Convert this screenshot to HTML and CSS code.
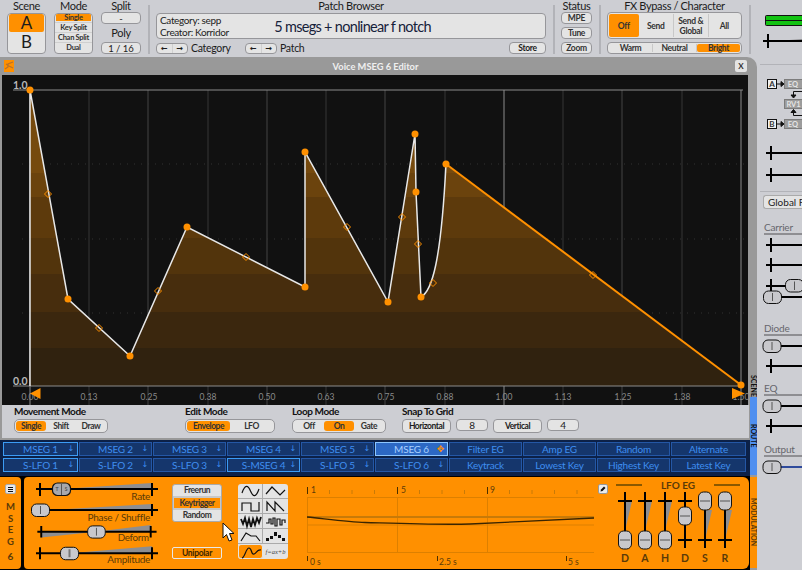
FILE: index.html
```html
<!DOCTYPE html>
<html lang="en">
<head>
<meta charset="UTF-8">
<meta name="viewport" content="width=device-width, initial-scale=1.0">
<title>Voice MSEG 6 Editor</title>
<link rel="stylesheet" href="styles.css">
</head>

<body>
<div class="app">
<div class="main">

<header class="topbar">
  <section class="group scene">
    <h4>Scene</h4>
    <div class="scene-box">
      <div class="scene-btn on">A</div>
      <div class="scene-btn">B</div>
    </div>
  </section>

  <section class="group mode">
    <h4>Mode</h4>
    <div class="mode-box">
      <div class="mode-row on">Single</div>
      <div class="mode-row">Key Split</div>
      <div class="mode-row">Chan Split</div>
      <div class="mode-row">Dual</div>
    </div>
  </section>

  <section class="group split">
    <h4>Split</h4>
    <div class="field">-</div>
    <h4 class="poly-label">Poly</h4>
    <div class="field">1 / 16</div>
  </section>

  <div class="divider"></div>

  <section class="group patch">
    <h4>Patch Browser</h4>
    <div class="patch-box">
      <div class="patch-info">
        <div>Category: sepp</div>
        <div>Creator: Korridor</div>
      </div>
      <div class="patch-name">5 msegs + nonlinear f notch</div>
    </div>
    <div class="patch-nav">
      <div class="arrows"><span>&#8592;</span><span>&#8594;</span></div>
      <span class="nav-label nav-category">Category</span>
      <div class="arrows"><span>&#8592;</span><span>&#8594;</span></div>
      <span class="nav-label">Patch</span>
      <div class="field store">Store</div>
    </div>
  </section>

  <div class="divider"></div>

  <section class="group status">
    <h4>Status</h4>
    <div class="status-btn">MPE</div>
    <div class="status-btn">Tune</div>
    <div class="status-btn">Zoom</div>
  </section>

  <div class="divider"></div>

  <section class="group fx">
    <h4>FX Bypass / Character</h4>
    <div class="fx-box">
      <div class="fx-cell fx-off on">Off</div>
      <div class="fx-cell fx-send">Send</div>
      <div class="fx-cell fx-global">Send &amp;<br>Global</div>
      <div class="fx-cell fx-all">All</div>
    </div>
    <div class="char-box">
      <div class="char-cell">Warm</div>
      <div class="char-cell">Neutral</div>
      <div class="char-cell on">Bright</div>
    </div>
  </section>

  <div class="divider"></div>
</header>

<div class="window">
  <div class="titlebar">
    <svg class="title-icon" viewBox="0 0 10 12">
      <rect width="10" height="12" fill="#ff9000"/>
      <path d="M1 9 L4 7 L4 4 L9 2 M2 4 L5 6 L9 8" fill="none" stroke="#b8722a" stroke-width="1.3"/>
    </svg>
    <div class="title-text">Voice MSEG 6 Editor</div>
    <div class="title-close">X</div>
  </div>

  <div class="window-body">
    <div class="editor">
      <svg class="graph" viewBox="2 75 746 330">
        <defs>
          <linearGradient id="bands" gradientUnits="userSpaceOnUse" x1="0" y1="90" x2="0" y2="386">
            <stop offset="0" stop-color="#764a0e"/>
            <stop offset="0.28" stop-color="#764a0e"/>
            <stop offset="0.28" stop-color="#6b430d"/>
            <stop offset="0.36" stop-color="#6b430d"/>
            <stop offset="0.36" stop-color="#5d3a0c"/>
            <stop offset="0.5" stop-color="#5d3a0c"/>
            <stop offset="0.5" stop-color="#52340c"/>
            <stop offset="0.62" stop-color="#52340c"/>
            <stop offset="0.62" stop-color="#472d0d"/>
            <stop offset="0.75" stop-color="#472d0d"/>
            <stop offset="0.75" stop-color="#3b270e"/>
            <stop offset="0.87" stop-color="#3b270e"/>
            <stop offset="0.87" stop-color="#30220f"/>
            <stop offset="1" stop-color="#30220f"/>
          </linearGradient>
        </defs>
        <path class="grid-dim" d="M89 90V405M208 90V405M326 90V405M445 90V405M563 90V405M682 90V405"/>
        <path class="grid-mid" d="M148 90V405M267 90V405M385 90V405M622 90V405"/>
        <path class="grid-bright" d="M504 90V405M741 90V405M30 90V405"/>
        <path class="grid-dots" d="M22 164H745M22 239H745M22 313H745"/>
        <path class="fill" d="M30 386V90L68 299L130 356L187 227L305 287V152L388 302L415 134L416 192L421 297C432 291 441 262 446 164L741 386Z"/>
        <path class="grid-bright" d="M13 90H743M13 386H743"/>
        <path class="curve" d="M30 386V90L68 299L130 356L187 227L305 287V152L388 302L415 134L416 192L421 297C432 291 441 262 446 164"/>
        <path class="curve-hot" d="M446 164L741 385"/>
        <g class="handles">
          <path d="M48 190.500l3.500 3.500l-3.500 3.500l-3.500-3.500z"/><path d="M99 324.500l3.500 3.500l-3.500 3.500l-3.500-3.500z"/>
          <path d="M158 287.500l3.500 3.500l-3.500 3.500l-3.500-3.500z"/><path d="M246 253.500l3.500 3.500l-3.500 3.500l-3.500-3.500z"/>
          <path d="M347 223.500l3.500 3.500l-3.500 3.500l-3.500-3.500z"/><path d="M402 213.500l3.500 3.500l-3.500 3.500l-3.500-3.500z"/>
          <path d="M418 240.500l3.500 3.500l-3.500 3.500l-3.500-3.500z"/><path d="M433 279.500l3.500 3.500l-3.500 3.500l-3.500-3.500z"/>
          <path d="M593 271.500l3.500 3.500l-3.500 3.500l-3.500-3.500z"/>
        </g>
        <g class="nodes">
          <circle cx="30" cy="90" r="3.5"/><circle cx="68" cy="299" r="3.5"/>
          <circle cx="130" cy="356" r="3.5"/><circle cx="187" cy="227" r="3.5"/>
          <circle cx="305" cy="287" r="3.5"/><circle cx="305" cy="152" r="3.5"/>
          <circle cx="388" cy="302" r="3.5"/><circle cx="415" cy="134" r="3.5"/>
          <circle cx="416" cy="192" r="3.5"/><circle cx="421" cy="297" r="3.5"/>
          <circle cx="446" cy="164" r="3.5"/><circle cx="741" cy="385" r="3.5"/>
        </g>
        <text class="axis-y" x="13" y="89">1.0</text>
        <text class="axis-y" x="13" y="385">0.0</text>
        <g class="axis-x">
          <text x="30" y="400">0.00</text><text x="89" y="400">0.13</text>
          <text x="149" y="400">0.25</text><text x="208" y="400">0.38</text>
          <text x="267" y="400">0.50</text><text x="326" y="400">0.63</text>
          <text x="386" y="400">0.75</text><text x="445" y="400">0.88</text>
          <text x="504" y="400">1.00</text><text x="563" y="400">1.13</text>
          <text x="623" y="400">1.25</text><text x="682" y="400">1.38</text>
          <text x="741" y="400">1.50</text>
        </g>
        <path class="marker" d="M30 393.5L40.5 388V399Z"/>
        <path class="marker" d="M745 393.5L732 388V399Z"/>
      </svg>

      <div class="controls">
        <div class="ctl ctl-move">
          <h5>Movement Mode</h5>
          <div class="seg">
            <div class="seg-cell on">Single</div>
            <div class="seg-cell">Shift</div>
            <div class="seg-cell">Draw</div>
          </div>
        </div>
        <div class="ctl ctl-edit">
          <h5>Edit Mode</h5>
          <div class="seg">
            <div class="seg-cell on">Envelope</div>
            <div class="seg-cell">LFO</div>
          </div>
        </div>
        <div class="ctl ctl-loop">
          <h5>Loop Mode</h5>
          <div class="seg">
            <div class="seg-cell">Off</div>
            <div class="seg-cell on">On</div>
            <div class="seg-cell">Gate</div>
          </div>
        </div>
        <div class="ctl ctl-snap">
          <h5>Snap To Grid</h5>
          <div class="snap-row">
            <div class="snap-btn">Horizontal</div>
            <div class="snap-val">8</div>
            <div class="snap-btn">Vertical</div>
            <div class="snap-val">4</div>
          </div>
        </div>
      </div>

      <div class="mods">
        <div class="mod used">MSEG 1<i>&#8595;</i></div>
        <div class="mod">MSEG 2<i>&#8595;</i></div>
        <div class="mod">MSEG 3<i>&#8595;</i></div>
        <div class="mod">MSEG 4<i>&#8595;</i></div>
        <div class="mod">MSEG 5<i>&#8595;</i></div>
        <div class="mod selected">MSEG 6<i>&#10021;</i></div>
        <div class="mod plain">Filter EG</div>
        <div class="mod plain">Amp EG</div>
        <div class="mod plain">Random</div>
        <div class="mod plain">Alternate</div>

        <div class="mod used">S-LFO 1<i>&#8595;</i></div>
        <div class="mod">S-LFO 2<i>&#8595;</i></div>
        <div class="mod">S-LFO 3<i>&#8595;</i></div>
        <div class="mod used">S-MSEG 4<i>&#8595;</i></div>
        <div class="mod">S-LFO 5<i>&#8595;</i></div>
        <div class="mod">S-LFO 6<i>&#8595;</i></div>
        <div class="mod plain">Keytrack</div>
        <div class="mod plain">Lowest Key</div>
        <div class="mod plain">Highest Key</div>
        <div class="mod plain">Latest Key</div>
      </div>

      <div class="panel">
        <div class="panel-tag">
          <div class="menu-btn"><span></span><span></span><span></span></div>
          <div class="tag-letters">M<br>S<br>E<br>G</div>
          <div class="tag-num">6</div>
        </div>

        <div class="panel-main">
          <div class="lfo-sliders">
            <svg class="lfo-slider" viewBox="30 479 130 21">
              <path class="wedge" d="M61 489L152 483V489Z"/>
              <path class="track" d="M36 489H158M40 483V496M152 483V496"/>
              <rect class="knob knob-ts" x="52.5" y="483" width="18" height="12.5" rx="5"/>
              <path class="knob-mark" d="M61.500 484V495"/>
              <text class="ts" x="57" y="491">T</text><text class="ts" x="66" y="491">S</text>
              <text class="slider-label" x="150" y="500">Rate</text>
            </svg>
            <svg class="lfo-slider" viewBox="30 500 130 21">
              <path class="wedge" d="M50 510L152 504V510Z"/>
              <path class="track" d="M36 510H158M152 504V516"/>
              <rect class="knob" x="31.500" y="504" width="18" height="12.500" rx="5"/>
              <path class="knob-mark" d="M40.500 506V514"/>
              <text class="slider-label" x="150" y="520.500">Phase / Shuffle</text>
            </svg>
            <svg class="lfo-slider lower" viewBox="30 521 130 22">
              <path class="wedge" d="M40 532V538L96 532ZM96 532H152V525Z"/>
              <path class="track" d="M36 532H158M40 526V538M152 526V538"/>
              <rect class="knob" x="87.500" y="526" width="18" height="12.500" rx="5"/>
              <path class="knob-mark" d="M96.500 528V536"/>
              <text class="slider-label" x="150" y="541.500">Deform</text>
            </svg>
            <svg class="lfo-slider lower" viewBox="30 543 130 21">
              <path class="wedge" d="M70 553L152 546V553Z"/>
              <path class="track" d="M36 553H158M40 547V559M152 547V559"/>
              <rect class="knob" x="60.500" y="547" width="18" height="12.500" rx="5"/>
              <path class="knob-mark dark" d="M69.500 549V557"/>
              <text class="slider-label" x="150" y="563">Amplitude</text>
            </svg>
          </div>

          <div class="trigger-col">
            <div class="trigger-box">
              <div class="trigger-row">Freerun</div>
              <div class="trigger-band"><div class="trigger-on">Keytrigger</div></div>
              <div class="trigger-row">Random</div>
            </div>
            <div class="unipolar">Unipolar</div>
          </div>

          <div class="shapes">
            <div class="shape"><svg viewBox="0 0 25 15"><path d="M4 9C7 0 10 1 12.500 7S18 14 21 5"/></svg></div>
            <div class="shape"><svg viewBox="0 0 25 15"><path d="M3 10L9 3L17 11L22 6"/></svg></div>
            <div class="shape"><svg viewBox="0 0 25 15"><path d="M4 12V4H13V12H21V3"/></svg></div>
            <div class="shape"><svg viewBox="0 0 25 15"><path d="M4 12V3L12 12V3L21 12"/></svg></div>
            <div class="shape"><svg viewBox="0 0 25 15"><path class="heavy" d="M3 5L5 10L7 4L9 12L11 5L13 13L15 5L17 11L19 4L21 9L23 3"/></svg></div>
            <div class="shape"><svg viewBox="0 0 25 15"><path d="M3 9H6V5H8V10H10V4H12V12H14V5H17V11H19V6H22V9"/></svg></div>
            <div class="shape"><svg viewBox="0 0 25 15"><path d="M3 12L8 4L13 7H18L22 12"/></svg></div>
            <div class="shape"><svg viewBox="0 0 25 15"><path class="blocks" d="M3 9H6V12H3ZM7 7H10V10H7ZM11 3H14V7H11ZM15 6H18V9H15ZM19 9H22V12H19Z"/></svg></div>
            <div class="shape on"><svg viewBox="0 0 25 15"><path d="M3 13C6 12 7 3 10 3S12 10 15 9S18 4 22 5"/></svg></div>
            <div class="shape"><svg viewBox="0 0 25 15"><text class="formula" x="12.500" y="10">f=ax+b</text></svg></div>
          </div>

          <svg class="display" viewBox="307 484 300 80">
            <path class="disp-line" d="M307 497.500H594M307 525H594M307 552.500H594M307.500 498V553M397.500 498V553M487.500 498V553"/>
            <path class="disp-thick" d="M307 517H594"/>
            <path class="disp-minor" d="M329.500 490V494M352 490V494M374.500 490V494M419.500 490V494M442 490V494M464.500 490V494M509.500 490V494M532 490V494M554.500 490V494M577 490V494"/>
            <path class="disp-major" d="M307.500 487V494M397.500 487V494M487.500 487V494M307.500 556V561M437.500 556V561M566.500 556V561"/>
            <path class="disp-curve" d="M307 517C335 520 350 522 365 522.500C400 523.500 440 525 470 524C510 522 560 520 594 518"/>
            <text class="disp-num" x="311" y="493">1</text>
            <text class="disp-num" x="401" y="493">5</text>
            <text class="disp-num" x="490" y="493">9</text>
            <text class="disp-num" x="310" y="565">0 s</text>
            <text class="disp-num" x="439" y="565">2.5 s</text>
            <text class="disp-num" x="568" y="565">5 s</text>
            <rect class="edit-box" x="598.500" y="484.500" width="9" height="9" rx="1.500"/>
            <path class="edit-pen" d="M600.500 491.500L601 489.500L604 486.500L605.500 488L602.500 491Z"/>
          </svg>

          <div class="eg">
            <div class="eg-title"><span></span>LFO EG<span></span></div>
            <div class="faders">
              <div class="fader">
                <svg viewBox="0 0 20 58"><path class="wedge" d="M10 9H17L10 39Z"/><path class="track" d="M10 0V56M3 9H17M3 48H17"/><rect class="knob" x="3.500" y="39" width="13" height="18" rx="5"/><path class="knob-mark" d="M5 48H15"/></svg>
                <span>D</span>
              </div>
              <div class="fader">
                <svg viewBox="0 0 20 58"><path class="wedge" d="M10 9H17L10 39Z"/><path class="track" d="M10 0V56M3 9H17M3 48H17"/><rect class="knob" x="3.500" y="39" width="13" height="18" rx="5"/><path class="knob-mark" d="M5 48H15"/></svg>
                <span>A</span>
              </div>
              <div class="fader">
                <svg viewBox="0 0 20 58"><path class="wedge" d="M10 9H17L10 39Z"/><path class="track" d="M10 0V56M3 9H17M3 48H17"/><rect class="knob" x="3.500" y="39" width="13" height="18" rx="5"/><path class="knob-mark" d="M5 48H15"/></svg>
                <span>H</span>
              </div>
              <div class="fader">
                <svg viewBox="0 0 20 58"><path class="track" d="M10 0V56M3 9H17M3 48H17"/><rect class="knob" x="3.500" y="15" width="13" height="18" rx="5"/><path class="knob-mark" d="M5 24H15"/></svg>
                <span>D</span>
              </div>
              <div class="fader">
                <svg viewBox="0 0 20 58"><path class="wedge" d="M10 18H17L10 48Z"/><path class="track" d="M10 0V56M3 48H17"/><rect class="knob" x="3.500" y="0" width="13" height="18" rx="5"/><path class="knob-mark" d="M5 9H15"/></svg>
                <span>S</span>
              </div>
              <div class="fader">
                <svg viewBox="0 0 20 58"><path class="wedge" d="M10 18H17L10 48Z"/><path class="track" d="M10 0V56M3 48H17"/><rect class="knob" x="3.500" y="0" width="13" height="18" rx="5"/><path class="knob-mark" d="M5 9H15"/></svg>
                <span>R</span>
              </div>
            </div>
          </div>

          <svg class="cursor" viewBox="0 0 13 21">
            <path d="M1 1V16L4.500 12.500L7 19L10 18L7.500 11.500H12Z"/>
          </svg>
        </div>
      </div>
    </div>

    <div class="tabs">
      <div class="tab tab-scene">SCENE</div>
      <div class="tab tab-route">ROUTE</div>
      <div class="tab tab-mod">MODULATION</div>
    </div>
  </div>
</div>
</div>

<aside class="side">
  <div class="side-top">
    <div class="meter"><span></span><span></span></div>
    <svg class="side-slider" viewBox="0 0 45 20"><path class="wedge" d="M20 10L45 8V10Z"/><path class="track" d="M6 10H45M11 3V17"/></svg>
  </div>

  <div class="side-route">
    <svg class="route-map" viewBox="0 0 45 50">
      <rect class="route-io" x="10.500" y="0.500" width="9" height="9"/><text class="io-text" x="15" y="8">A</text>
      <path class="route-arrow" d="M20 5H24M24 2.500L27 5L24 7.500Z"/>
      <rect class="route-fx" x="27.500" y="0.500" width="20" height="9"/><text class="fx-text" x="36" y="8">EQ</text>
      <path class="route-line" d="M45 12.500H36.500V16"/>
      <path class="route-arrow" d="M34 16H39L36.500 19Z"/>
      <rect class="route-fx" x="27.500" y="20.500" width="20" height="9"/><text class="fx-text" x="36.500" y="28">RV1</text>
      <path class="route-line" d="M36.500 33V36.500H45"/>
      <path class="route-arrow" d="M34 33.500H39L36.500 30.500Z"/>
      <rect class="route-io" x="10.500" y="40.500" width="9" height="9"/><text class="io-text" x="15" y="48">B</text>
      <path class="route-arrow" d="M20 45H24M24 42.500L27 45L24 47.500Z"/>
      <rect class="route-fx" x="27.500" y="40.500" width="20" height="9"/><text class="fx-text" x="36" y="48">EQ</text>
    </svg>
    <div class="route-sliders">
      <svg class="side-slider" viewBox="0 0 45 20"><path class="track" d="M9 10H45M14 3V17"/></svg>
      <svg class="side-slider" viewBox="0 0 45 20"><path class="track" d="M9 10H45M14 3V17"/></svg>
    </div>
  </div>

  <div class="fx-menu">Global FX</div>

  <div class="side-group carrier">
    <div class="side-label">Carrier</div>
    <svg class="side-slider" viewBox="0 0 45 20"><path class="track" d="M9 10H45M14 3V17"/></svg>
    <svg class="side-slider" viewBox="0 0 45 20"><path class="track" d="M9 10H45M14 3V17"/></svg>
    <svg class="side-slider short" viewBox="0 -5 45 12"><path class="track" d="M9 6H45M14 -1V13"/><rect class="knob" x="28.500" y="-0.500" width="18" height="12.500" rx="5"/><path class="knob-mark" d="M37.500 1.500V10"/></svg>
    <svg class="side-slider" viewBox="0 0 45 20"><path class="track" d="M10 10H45"/><rect class="knob" x="6.500" y="4" width="18" height="12.500" rx="5"/><path class="knob-mark" d="M15.500 6V14"/></svg>
  </div>

  <div class="side-group diode">
    <div class="side-label">Diode</div>
    <svg class="side-slider" viewBox="0 0 45 20"><path class="track" d="M10 10H45"/><rect class="knob" x="6" y="4" width="18" height="12.500" rx="5"/><path class="knob-mark" d="M15 6V14"/></svg>
    <svg class="side-slider" viewBox="0 0 45 20"><path class="track" d="M9 10H45M14 3V17"/></svg>
  </div>

  <div class="side-group eq">
    <div class="side-label">EQ</div>
    <svg class="side-slider" viewBox="0 0 45 20"><path class="track" d="M10 10H45"/><rect class="knob" x="6" y="4" width="18" height="12.500" rx="5"/><path class="knob-mark" d="M15 6V14"/></svg>
    <svg class="side-slider" viewBox="0 0 45 20"><path class="track" d="M9 10H45M14 3V17"/></svg>
  </div>

  <div class="side-group output">
    <div class="side-label">Output</div>
    <svg class="side-slider" viewBox="0 0 45 20"><path class="track-blue" d="M20 10H45"/><rect class="knob" x="6" y="4" width="18" height="12.500" rx="5"/><path class="knob-mark" d="M15 6V14"/></svg>
  </div>
</aside>
</div>
</body>
</html>
```

FILE: styles.css
```css
/* MSEG editor over the synth main frame */
body {
  margin: 0;
  background: #cdced3;
  font-family: Lato, "Open Sans", sans-serif;
  color: #1c1c1c;
  overflow: hidden;
}

.app {
  display: flex;
  width: 802px;
  height: 570px;
  overflow: hidden;
}

.main {
  width: 757px;
  flex: none;
}

.side {
  width: 45px;
  flex: none;
}

/* top bar */
.topbar {
  display: flex;
  height: 57px;
  padding-left: 7px;
  box-sizing: border-box;
}

.group h4 {
  margin: 0;
  height: 12px;
  line-height: 12px;
  font-size: 11px;
  font-weight: 400;
  letter-spacing: -0.35px;
  text-align: center;
}

.divider {
  width: 2px;
  height: 49px;
  margin: 5px 6px 0 7px;
  background: #b2b3b8;
}

.scene { width: 39px; margin-right: 8px; }
.mode { width: 39px; margin-right: 8px; }
.split { width: 40px; }
.patch { width: 390px; }
.status { width: 31px; }
.fx { width: 135px; }

.scene-box, .mode-box {
  height: 41px;
  margin-top: 1px;
  box-sizing: border-box;
  background: #e4e4e4;
  border: 1px solid #96969a;
  border-radius: 4px;
  overflow: hidden;
}

.scene-btn {
  height: 20px;
  line-height: 20px;
  text-align: center;
  font-size: 17px;
}

.scene-btn.on {
  margin: 0 1px;
  background: #ff9000;
  border-radius: 2px;
  height: 18px;
  line-height: 18px;
}

.mode-row {
  height: 10px;
  line-height: 10px;
  font-size: 7.500px;
  font-weight: 700;
  letter-spacing: -0.3px;
  text-align: center;
  color: #333;
  border-top: 1px solid #cfcfcf;
  box-sizing: border-box;
}

.mode-row.on {
  height: 7px;
  line-height: 7px;
  margin: 0 1px 1px;
  background: #ff9000;
  border: none;
}

.field {
  height: 12px;
  line-height: 11px;
  box-sizing: border-box;
  background: #e4e4e4;
  border: 1px solid #96969a;
  border-radius: 4px;
  font-size: 9.500px;
  text-align: center;
}

.group .poly-label { margin: 3px 0; }

.patch-box {
  display: grid;
  grid-template-columns: 1fr auto 1fr;
  align-items: center;
  height: 26px;
  margin-top: 1px;
  padding-left: 3px;
  box-sizing: border-box;
  background: #e4e4e4;
  border: 1px solid #96969a;
  border-radius: 4px;
}

.patch-info {
  font-size: 10px;
  letter-spacing: -0.35px;
  line-height: 12px;
}

.patch-name {
  font-size: 14.500px;
  letter-spacing: -0.7px;
  color: #16213a;
}

.patch-nav {
  display: flex;
  align-items: center;
  margin-top: 3px;
}

.arrows {
  display: flex;
  width: 32px;
  height: 11px;
  box-sizing: border-box;
  background: #e4e4e4;
  border: 1px solid #96969a;
  border-radius: 4px;
  font-family: "DejaVu Sans", sans-serif;
  font-size: 8px;
  font-weight: 700;
  line-height: 9px;
  text-align: center;
}

.arrows span { flex: 1; }
.arrows span:first-child { border-right: 1px solid #cfcfcf; }

.nav-label {
  margin-left: 3px;
  font-size: 10.500px;
  letter-spacing: -0.3px;
  line-height: 11px;
}

.nav-category { width: 54px; }

.store {
  width: 37px;
  margin-left: auto;
  font-size: 8.500px;
  font-weight: 700;
  letter-spacing: -0.3px;
}

.status-btn {
  height: 12px;
  line-height: 10px;
  margin-bottom: 3px;
  box-sizing: border-box;
  background: #e4e4e4;
  border: 1px solid #96969a;
  border-radius: 4px;
  font-size: 8.500px;
  font-weight: 700;
  letter-spacing: -0.3px;
  text-align: center;
  color: #333;
}

.fx-box {
  display: flex;
  height: 27px;
  box-sizing: border-box;
  padding: 1px;
  background: #e4e4e4;
  border: 1px solid #96969a;
  border-radius: 4px;
}

.fx-cell {
  display: flex;
  align-items: center;
  justify-content: center;
  text-align: center;
  font-size: 8.500px;
  font-weight: 700;
  letter-spacing: -0.35px;
  line-height: 10px;
  color: #333;
  border-right: 1px solid #c8c8c8;
}

.fx-off { width: 30px; border: none; }
.fx-send { width: 35px; }
.fx-global { width: 34px; }
.fx-all { width: 32px; border: none; }
.fx-cell.on { background: #ff9000; border-radius: 2px; }

.char-box {
  display: flex;
  height: 12px;
  margin-top: 3px;
  padding: 1px;
  box-sizing: border-box;
  background: #e4e4e4;
  border: 1px solid #96969a;
  border-radius: 4px;
}

.char-cell {
  flex: 1;
  font-size: 8.500px;
  font-weight: 700;
  letter-spacing: -0.35px;
  line-height: 8px;
  text-align: center;
  color: #333;
  border-right: 1px solid #c8c8c8;
}

.char-cell:last-child { border: none; }
.char-cell.on { background: #ff9000; border-radius: 2px; }

/* editor window */
.window {
  height: 513px;
  background: #999999;
  border-top-right-radius: 10px;
  overflow: hidden;
}

.titlebar {
  position: relative;
  display: flex;
  align-items: center;
  height: 18px;
  padding: 0 10px 0 4px;
}

.title-icon { width: 10px; height: 12px; }

.title-text {
  flex: 1;
  margin-left: 2px;
  text-align: center;
  font-size: 9.300px;
  font-weight: 700;
  color: #efefef;
}

.title-close {
  width: 12px;
  height: 12px;
  line-height: 12px;
  background: #e4e4e4;
  border-radius: 2px;
  font-size: 8px;
  font-weight: 700;
  text-align: center;
  color: #333;
}

.window-body { display: flex; }

.editor { width: 750px; flex: none; }

.graph {
  display: block;
  width: 746px;
  height: 330px;
  margin-left: 2px;
  background: #111111;
}

.grid-dim { stroke: #363636; fill: none; }
.grid-mid { stroke: #444444; fill: none; }
.grid-bright { stroke: #8c8c8c; fill: none; }
.grid-dots { stroke: #333; fill: none; stroke-dasharray: 1 6; }
.fill { fill: url(#bands); }
.curve { fill: none; stroke: #e8e8e8; stroke-width: 1.5; }
.curve-hot { stroke: #ff9000; stroke-width: 2; }
.nodes { fill: #ff9000; }
.handles { fill: none; stroke: #ff9000; stroke-width: 1; }
.marker { fill: #ff9000; }

.axis-y {
  font-size: 10.500px;
  font-weight: 700;
  fill: #b8b8b8;
}

.axis-x {
  font-size: 8.500px;
  fill: #8a8a8a;
  text-anchor: middle;
}

.controls {
  display: flex;
  height: 33px;
  width: 747px;
  margin-left: 2px;
  margin-bottom: 2px;
  background: #cdced3;
}

.ctl h5 {
  margin: 1px 0 2px;
  height: 11px;
  line-height: 11px;
  font-size: 10px;
  font-weight: 700;
  letter-spacing: -0.4px;
  color: #111;
}

.ctl-move { margin-left: 12px; width: 171px; }
.ctl-edit { width: 107px; }
.ctl-loop { width: 110px; }

.seg {
  display: flex;
  height: 14px;
  padding: 1px;
  box-sizing: border-box;
  background: #e4e4e4;
  border: 1px solid #96969a;
  border-radius: 5px;
}

.ctl-move .seg { width: 94px; }
.ctl-edit .seg { width: 90px; }
.ctl-loop .seg { width: 94px; }

.seg-cell {
  flex: 1;
  font-size: 8.500px;
  font-weight: 700;
  letter-spacing: -0.45px;
  line-height: 10px;
  text-align: center;
  color: #333;
}

.seg-cell.on { background: #ff9000; border-radius: 3px; }

.snap-row { display: flex; gap: 5px; }

.snap-btn, .snap-val {
  height: 14px;
  line-height: 12px;
  box-sizing: border-box;
  background: #e4e4e4;
  border: 1px solid #96969a;
  border-radius: 4px;
  text-align: center;
  font-size: 8.500px;
  font-weight: 700;
  letter-spacing: -0.45px;
}

.snap-btn { width: 49px; }

.snap-val {
  width: 32px;
  font-size: 10px;
  font-weight: 400;
  height: 12px;
  line-height: 10px;
}

/* modulation source buttons */
.mods {
  display: grid;
  grid-template-columns: 75px repeat(8, 73px) 75px;
  grid-auto-rows: 14px;
  column-gap: 1px;
  row-gap: 2px;
  height: 36px;
  padding: 2px 4px 0 3px;
  box-sizing: border-box;
  background: #0c2148;
}

.mod {
  position: relative;
  box-sizing: border-box;
  background: #15366c;
  border: 1px solid #2457a5;
  font-size: 10px;
  letter-spacing: -0.2px;
  line-height: 12px;
  text-align: center;
  color: #3f8ef0;
  white-space: nowrap;
}

.mod.used { border-color: #3c9cf5; }

.mod.selected {
  background: #2c68c4;
  border-color: #8cc6ff;
  color: #a8d0ff;
}

.mod i {
  position: absolute;
  right: 3px;
  top: 0;
  font-family: "DejaVu Sans", sans-serif;
  font-style: normal;
  font-size: 8px;
}

.mod.selected i { color: #ff9000; font-size: 9px; }

/* lfo panel */
.panel {
  display: flex;
  height: 94px;
  padding: 1px 1px 1px 0;
  box-sizing: border-box;
  background: #000;
}

.panel-tag {
  width: 21px;
  flex: none;
  margin-right: 3px;
  background: #ff9000;
  border-radius: 0 4px 4px 0;
  text-align: center;
  color: #5a3a08;
  font-weight: 700;
}

.menu-btn {
  display: flex;
  flex-direction: column;
  gap: 1px;
  justify-content: center;
  width: 11px;
  height: 10px;
  margin: 7px 0 0 5px;
  padding: 0 2px;
  box-sizing: border-box;
  background: #e8e8e8;
  border: 1px solid #aaa;
  border-radius: 2px;
}

.menu-btn span { height: 1px; background: #111; }

.tag-letters {
  margin-top: 7px;
  font-size: 9.500px;
  line-height: 11.500px;
}

.tag-num {
  margin-top: 3px;
  font-size: 10px;
}

.panel-main {
  position: relative;
  display: flex;
  flex: 1;
  background: #ff9000;
  border-radius: 4px 6px 6px 4px;
}

svg { overflow: visible; }

.lfo-sliders {
  width: 130px;
  flex: none;
  margin: 2px 0 0 6px;
}

.lfo-slider {
  display: block;
  width: 130px;
  height: 21px;
}

.lfo-slider.lower { height: 21.500px; }

.track { fill: none; stroke: #000; stroke-width: 2; }
.track-blue { fill: none; stroke: #2f4b9c; stroke-width: 2; }
.wedge { fill: #8e8e90; }
.knob { fill: #c8c8cc; stroke: #111; stroke-width: 1; }
.knob-ts { fill: #a8a8ac; stroke-width: 1.200; }
.knob-mark { stroke: #555; stroke-width: 1; fill: none; }
.knob-mark.dark { stroke-width: 2; stroke: #777; }
.ts { font-size: 5px; font-weight: 700; fill: #555; text-anchor: middle; }

.slider-label {
  font-size: 10px;
  letter-spacing: -0.3px;
  fill: #5a3a08;
  text-anchor: end;
}

.trigger-col {
  display: flex;
  flex-direction: column;
  justify-content: space-between;
  width: 50px;
  height: 75px;
  margin: 7px 0 0 12px;
}

.trigger-box {
  height: 38px;
  box-sizing: border-box;
  background: #e4e4e4;
  border: 1px solid #aaa;
  border-radius: 3px;
}

.trigger-row {
  height: 11px;
  line-height: 11px;
  font-size: 8.500px;
  font-weight: 700;
  letter-spacing: -0.45px;
  text-align: center;
  color: #333;
}

.trigger-band {
  height: 14px;
  padding: 2px 1px;
  box-sizing: border-box;
  background: #c8c8c8;
}

.trigger-on {
  height: 10px;
  line-height: 10px;
  background: #ff9000;
  font-size: 8.500px;
  font-weight: 700;
  letter-spacing: -0.45px;
  text-align: center;
  color: #333;
}

.unipolar {
  height: 12px;
  line-height: 10px;
  box-sizing: border-box;
  background: #ff9000;
  border: 1px solid #e8e8e8;
  border-radius: 2px;
  font-size: 8.500px;
  font-weight: 700;
  letter-spacing: -0.3px;
  text-align: center;
  color: #3a2500;
}

.shapes {
  display: grid;
  grid-template-columns: 25px 25px;
  grid-auto-rows: 15px;
  width: 50px;
  height: 75px;
  margin: 7px 0 0 16px;
  background: #e4e4e4;
  border-radius: 3px;
  overflow: hidden;
}

.shape {
  box-sizing: border-box;
  border-right: 1px solid #aaa;
  border-bottom: 1px solid #aaa;
}

.shape:nth-child(even) { border-right: none; }
.shape:nth-last-child(-n+2) { border-bottom: none; }
.shape.on { background: #ff9000; border: 1px solid #e4e4e4; border-radius: 3px; }

.shape svg {
  display: block;
  width: 25px;
  height: 15px;
}

.shape path { fill: none; stroke: #111; stroke-width: 1.200; }
.shape path.heavy { stroke-width: 1.800; }
.shape path.blocks { fill: #111; stroke: none; }

.formula {
  font-family: "Liberation Serif", serif;
  font-style: italic;
  font-size: 6.500px;
  fill: #444;
  text-anchor: middle;
}

.display {
  display: block;
  width: 300px;
  height: 80px;
  flex: none;
  margin: 7px 0 0 19px;
}

.disp-line { fill: none; stroke: #dd8000; stroke-width: 1; }
.disp-thick { fill: none; stroke: #c87a08; stroke-width: 2; }
.disp-minor { fill: none; stroke: #c87a08; stroke-width: 1; }
.disp-major { fill: none; stroke: #4a3000; stroke-width: 1; }
.disp-curve { fill: none; stroke: #3a2500; stroke-width: 1.300; }
.disp-num { font-size: 8.500px; fill: #5a3a08; }
.edit-box { fill: #ececec; stroke: #999; }
.edit-pen { fill: #111; }

.eg {
  width: 124px;
  flex: none;
  margin: 0 0 0 9px;
}

.eg-title {
  display: flex;
  align-items: center;
  justify-content: space-between;
  height: 14px;
  padding-top: 2px;
  font-size: 10px;
  font-weight: 700;
  color: #5a3a08;
  box-sizing: border-box;
}

.eg-title span {
  width: 26px;
  height: 2px;
  background: #8a5800;
}

.faders {
  display: flex;
  margin-left: -1px;
}

.fader {
  width: 20px;
  text-align: center;
  font-size: 10.500px;
  font-weight: 700;
  color: #5a3a08;
}

.fader svg {
  display: block;
  width: 20px;
  height: 58px;
  margin-top: 1px;
}

.fader span { display: block; margin-top: 2px; }

.cursor {
  position: absolute;
  left: 198px;
  top: 45px;
  width: 13px;
  height: 21px;
}

.cursor path { fill: #fff; stroke: #111; stroke-width: 1; }

/* section tabs along the window edge */
.tabs {
  display: flex;
  flex-direction: column;
  width: 7px;
  flex: none;
  padding-top: 300px;
  background: #999;
}

.tab {
  writing-mode: vertical-rl;
  width: 7px;
  font-size: 7px;
  font-weight: 700;
  line-height: 7px;
  text-align: center;
  color: #111;
}

.tab-scene { height: 22px; }
.tab-route { height: 78px; background: #4f8ff0; }
.tab-mod { height: 91px; margin-top: 2px; background: #ff9000; color: #5a3a08; }

/* right hand scene column */
.side-top {
  height: 65px;
  padding-top: 15px;
  box-sizing: border-box;
  border-bottom: 1px solid #b2b3b8;
  margin-left: 3px;
}

.meter {
  display: flex;
  flex-direction: column;
  gap: 1px;
  height: 11px;
  margin: 0 0 5px 5px;
  padding: 1px 0 1px 1px;
  box-sizing: border-box;
  background: #111;
  border-radius: 2px 0 0 2px;
}

.meter span { flex: 1; background: #12c212; }

.side-slider {
  display: block;
  width: 45px;
  height: 20px;
}

.side-top .side-slider { margin-left: -3px; }

.side-slider.short { height: 12px; }

.side-route {
  height: 127px;
  padding-top: 14px;
  box-sizing: border-box;
  border-bottom: 1px solid #b2b3b8;
  margin-left: 3px;
}

.route-map {
  display: block;
  width: 45px;
  height: 50px;
  margin-left: -3px;
}

.route-io { fill: #f0f0f0; stroke: #111; }
.route-fx { fill: #9c9c9c; stroke: #7c7c7c; }
.route-arrow { fill: #111; stroke: #111; }
.route-line { fill: none; stroke: #111; }
.io-text { font-size: 8px; font-weight: 700; fill: #333; text-anchor: middle; }
.fx-text { font-size: 7.500px; font-weight: 700; fill: #e4e4e4; text-anchor: middle; }

.route-sliders {
  margin: 14px 0 0 -3px;
  display: flex;
  flex-direction: column;
  gap: 2px;
}

.fx-menu {
  height: 14px;
  margin: 3px 0 0 6px;
  padding-left: 4px;
  box-sizing: border-box;
  background: #e4e4e4;
  border: 1px solid #aaa;
  border-right: none;
  border-radius: 3px 0 0 3px;
  font-size: 10px;
  line-height: 12px;
  white-space: nowrap;
  overflow: hidden;
}

.side-label {
  height: 10px;
  margin-left: 7px;
  box-shadow: 0 2px 0 #8e8e92;
  font-size: 10px;
  letter-spacing: -0.2px;
  line-height: 8px;
  color: #66666c;
}

.side-label + svg { margin-top: 2px; }

.carrier { margin-top: 14px; }
.diode { margin-top: 17px; }
.eq { margin-top: 8px; }
.output { margin-top: 9px; }
```
